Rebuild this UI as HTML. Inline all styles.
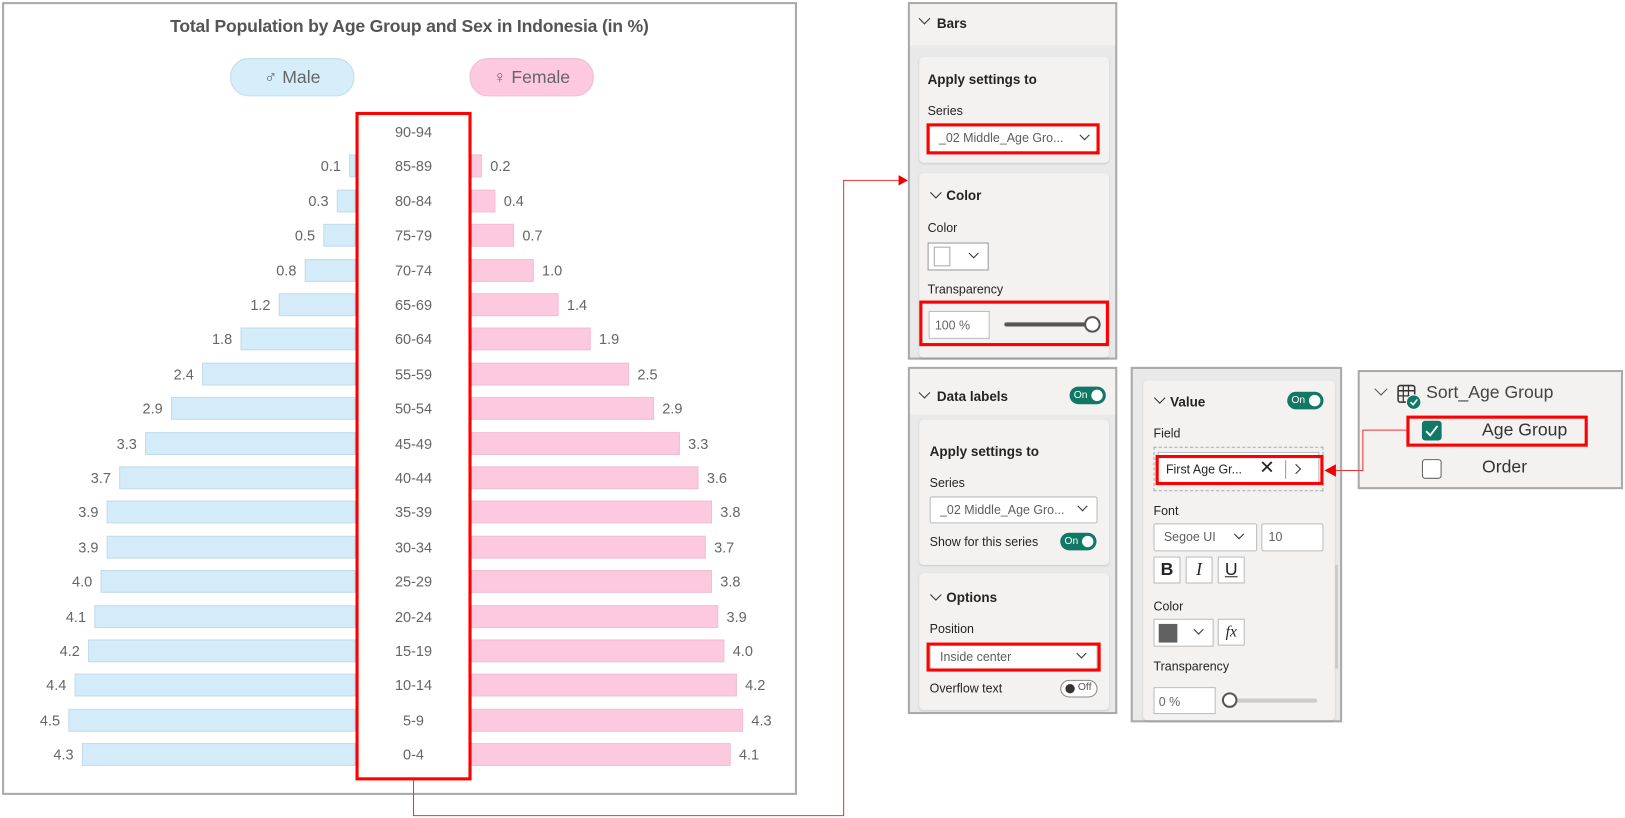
<!DOCTYPE html>
<html><head><meta charset="utf-8">
<style>
*{box-sizing:border-box;margin:0;padding:0}
html,body{width:1625px;height:818px;overflow:hidden;background:#fff}
#w{position:absolute;left:0;top:0;width:1568px;height:789px;transform:scale(1.0364);transform-origin:0 0;font-family:"Liberation Sans",sans-serif;color:#252423}
.a{position:absolute}
.chart{left:2px;top:2px;width:767px;height:765px;border:2px solid #aaa}
.title{left:0;width:790px;top:16px;text-align:center;font-weight:bold;font-size:17px;color:#555;letter-spacing:-0.2px}
.pill{top:56px;width:120px;height:37px;border-radius:18px;font-size:17px;color:#666;text-align:center;line-height:36px}
.row{height:22px;display:flex;align-items:center}
.m{right:1225px;justify-content:flex-end}
.f{left:453px}
.lab{font-size:14px;color:#666}
.mb{height:22px;background:#d4ecf9;border:1px solid #c4dbe8}
.fb{height:22px;background:#fdc9df;border:1px solid #efc0d3}
.age{left:343px;width:112px;text-align:center;font-size:14px;color:#666;height:22px;line-height:22px}
.red{border:3px solid #f00}
.panel{border:2px solid #aaa;background:#e9e9e9}
.card{background:#f3f2f1;border-radius:4px;box-shadow:0 1px 2px rgba(0,0,0,.12)}
.t{font-size:13px;color:#252423;white-space:nowrap}
.b{font-weight:bold}
.dd{background:#fff;border:1px solid #bbb;border-radius:2px;font-size:12px;color:#605e5c;padding-left:9px;line-height:24px;white-space:nowrap}
.chev{position:absolute;width:8px;height:8px;border-right:1.5px solid #333;border-bottom:1.5px solid #333;transform:rotate(45deg)}
.tog{width:35px;height:17px;border-radius:9px;background:#117865;color:#fff;font-size:10px;line-height:17px;padding-left:4px}
.tog:after{content:"";position:absolute;right:3px;top:3px;width:11px;height:11px;border-radius:50%;background:#fff}
.btn{background:#fff;border:1px solid #bbb;width:26px;height:26px;text-align:center;line-height:24px;font-size:17px}
</style></head><body><div id="w">

<div class="a chart"></div>
<div class="a title">Total Population by Age Group and Sex in Indonesia (in %)</div>
<div class="a pill" style="left:222px;background:#d6eefa;border:1px solid #c4dbe6">♂ Male</div>
<div class="a pill" style="left:453px;background:#fdc9df;border:1px solid #e8c0d0">♀ Female</div>

<div class="a age" style="top:116px">90-94</div>
<div class="a row m" style="top:149px"><span class="lab">0.1</span><div class="mb" style="width:6px;margin-left:8px"></div></div><div class="a row f" style="top:149px"><div class="fb" style="width:12px;margin-right:8px"></div><span class="lab">0.2</span></div><div class="a age" style="top:149px">85-89</div>
<div class="a row m" style="top:183px"><span class="lab">0.3</span><div class="mb" style="width:18px;margin-left:8px"></div></div><div class="a row f" style="top:183px"><div class="fb" style="width:25px;margin-right:8px"></div><span class="lab">0.4</span></div><div class="a age" style="top:183px">80-84</div>
<div class="a row m" style="top:216px"><span class="lab">0.5</span><div class="mb" style="width:31px;margin-left:8px"></div></div><div class="a row f" style="top:216px"><div class="fb" style="width:43px;margin-right:8px"></div><span class="lab">0.7</span></div><div class="a age" style="top:216px">75-79</div>
<div class="a row m" style="top:250px"><span class="lab">0.8</span><div class="mb" style="width:49px;margin-left:8px"></div></div><div class="a row f" style="top:250px"><div class="fb" style="width:62px;margin-right:8px"></div><span class="lab">1.0</span></div><div class="a age" style="top:250px">70-74</div>
<div class="a row m" style="top:283px"><span class="lab">1.2</span><div class="mb" style="width:74px;margin-left:8px"></div></div><div class="a row f" style="top:283px"><div class="fb" style="width:86px;margin-right:8px"></div><span class="lab">1.4</span></div><div class="a age" style="top:283px">65-69</div>
<div class="a row m" style="top:316px"><span class="lab">1.8</span><div class="mb" style="width:111px;margin-left:8px"></div></div><div class="a row f" style="top:316px"><div class="fb" style="width:117px;margin-right:8px"></div><span class="lab">1.9</span></div><div class="a age" style="top:316px">60-64</div>
<div class="a row m" style="top:350px"><span class="lab">2.4</span><div class="mb" style="width:148px;margin-left:8px"></div></div><div class="a row f" style="top:350px"><div class="fb" style="width:154px;margin-right:8px"></div><span class="lab">2.5</span></div><div class="a age" style="top:350px">55-59</div>
<div class="a row m" style="top:383px"><span class="lab">2.9</span><div class="mb" style="width:178px;margin-left:8px"></div></div><div class="a row f" style="top:383px"><div class="fb" style="width:178px;margin-right:8px"></div><span class="lab">2.9</span></div><div class="a age" style="top:383px">50-54</div>
<div class="a row m" style="top:417px"><span class="lab">3.3</span><div class="mb" style="width:203px;margin-left:8px"></div></div><div class="a row f" style="top:417px"><div class="fb" style="width:203px;margin-right:8px"></div><span class="lab">3.3</span></div><div class="a age" style="top:417px">45-49</div>
<div class="a row m" style="top:450px"><span class="lab">3.7</span><div class="mb" style="width:228px;margin-left:8px"></div></div><div class="a row f" style="top:450px"><div class="fb" style="width:221px;margin-right:8px"></div><span class="lab">3.6</span></div><div class="a age" style="top:450px">40-44</div>
<div class="a row m" style="top:483px"><span class="lab">3.9</span><div class="mb" style="width:240px;margin-left:8px"></div></div><div class="a row f" style="top:483px"><div class="fb" style="width:234px;margin-right:8px"></div><span class="lab">3.8</span></div><div class="a age" style="top:483px">35-39</div>
<div class="a row m" style="top:517px"><span class="lab">3.9</span><div class="mb" style="width:240px;margin-left:8px"></div></div><div class="a row f" style="top:517px"><div class="fb" style="width:228px;margin-right:8px"></div><span class="lab">3.7</span></div><div class="a age" style="top:517px">30-34</div>
<div class="a row m" style="top:550px"><span class="lab">4.0</span><div class="mb" style="width:246px;margin-left:8px"></div></div><div class="a row f" style="top:550px"><div class="fb" style="width:234px;margin-right:8px"></div><span class="lab">3.8</span></div><div class="a age" style="top:550px">25-29</div>
<div class="a row m" style="top:584px"><span class="lab">4.1</span><div class="mb" style="width:252px;margin-left:8px"></div></div><div class="a row f" style="top:584px"><div class="fb" style="width:240px;margin-right:8px"></div><span class="lab">3.9</span></div><div class="a age" style="top:584px">20-24</div>
<div class="a row m" style="top:617px"><span class="lab">4.2</span><div class="mb" style="width:258px;margin-left:8px"></div></div><div class="a row f" style="top:617px"><div class="fb" style="width:246px;margin-right:8px"></div><span class="lab">4.0</span></div><div class="a age" style="top:617px">15-19</div>
<div class="a row m" style="top:650px"><span class="lab">4.4</span><div class="mb" style="width:271px;margin-left:8px"></div></div><div class="a row f" style="top:650px"><div class="fb" style="width:258px;margin-right:8px"></div><span class="lab">4.2</span></div><div class="a age" style="top:650px">10-14</div>
<div class="a row m" style="top:684px"><span class="lab">4.5</span><div class="mb" style="width:277px;margin-left:8px"></div></div><div class="a row f" style="top:684px"><div class="fb" style="width:264px;margin-right:8px"></div><span class="lab">4.3</span></div><div class="a age" style="top:684px">5-9</div>
<div class="a row m" style="top:717px"><span class="lab">4.3</span><div class="mb" style="width:264px;margin-left:8px"></div></div><div class="a row f" style="top:717px"><div class="fb" style="width:252px;margin-right:8px"></div><span class="lab">4.1</span></div><div class="a age" style="top:717px">0-4</div>
<div class="a red" style="left:343px;top:108px;width:112px;height:645px"></div>

<!-- Bars panel -->
<div class="a panel" style="left:876px;top:2px;width:202px;height:345px"></div>
<div class="a" style="left:878px;top:4px;width:198px;height:40px;background:#f3f2f1"></div>
<div class="chev" style="left:888px;top:14px"></div>
<div class="a t b" style="left:904px;top:15px">Bars</div>
<div class="a card" style="left:887px;top:55px;width:183px;height:102px"></div>
<div class="a t b" style="left:895px;top:69px">Apply settings to</div>
<div class="a t" style="left:895px;top:100px;font-size:12px">Series</div>
<div class="a dd" style="left:896px;top:120px;width:163px;height:27px">_02 Middle_Age Gro...</div>
<div class="chev" style="left:1043px;top:127px;width:7px;height:7px"></div>
<div class="a red" style="left:894px;top:119px;width:167px;height:30px"></div>
<div class="a card" style="left:887px;top:167px;width:183px;height:178px"></div>
<div class="chev" style="left:899px;top:182px"></div>
<div class="a t b" style="left:913px;top:181px">Color</div>
<div class="a t" style="left:895px;top:213px;font-size:12px">Color</div>
<div class="a" style="left:895px;top:234px;width:59px;height:27px;background:#fff;border:1px solid #999"></div>
<div class="a" style="left:901px;top:238px;width:16px;height:19px;border:1px solid #aaa;background:#fff"></div>
<div class="chev" style="left:936px;top:241px;width:7px;height:7px"></div>
<div class="a t" style="left:895px;top:272px;font-size:12px">Transparency</div>
<div class="a" style="left:896px;top:300px;width:59px;height:27px;background:#fff;border:1px solid #bbb;font-size:12px;color:#666;padding:6px 0 0 5px">100 %</div>
<div class="a" style="left:969px;top:311px;width:82px;height:4px;background:#555;border-radius:2px"></div>
<div class="a" style="left:1046px;top:305px;width:16px;height:16px;border-radius:50%;background:#fff;border:2px solid #555"></div>
<div class="a red" style="left:887px;top:290px;width:183px;height:44px"></div>

<!-- Data labels panel -->
<div class="a panel" style="left:876px;top:354px;width:202px;height:335px"></div>
<div class="a" style="left:878px;top:356px;width:198px;height:44px;background:#f3f2f1"></div>
<div class="chev" style="left:888px;top:375px"></div>
<div class="a t b" style="left:904px;top:375px">Data labels</div>
<div class="a tog" style="left:1032px;top:373px">On</div>
<div class="a card" style="left:887px;top:405px;width:183px;height:140px"></div>
<div class="a t b" style="left:897px;top:428px">Apply settings to</div>
<div class="a t" style="left:897px;top:459px;font-size:12px">Series</div>
<div class="a dd" style="left:897px;top:479px;width:162px;height:26px">_02 Middle_Age Gro...</div>
<div class="chev" style="left:1041px;top:485px;width:7px;height:7px"></div>
<div class="a t" style="left:897px;top:516px;font-size:12px">Show for this series</div>
<div class="a tog" style="left:1023px;top:514px">On</div>
<div class="a card" style="left:887px;top:553px;width:183px;height:132px"></div>
<div class="chev" style="left:899px;top:570px"></div>
<div class="a t b" style="left:913px;top:569px">Options</div>
<div class="a t" style="left:897px;top:600px;font-size:12px">Position</div>
<div class="a dd" style="left:897px;top:621px;width:162px;height:25px">Inside center</div>
<div class="chev" style="left:1040px;top:627px;width:7px;height:7px"></div>
<div class="a red" style="left:894px;top:620px;width:168px;height:28px"></div>
<div class="a t" style="left:897px;top:657px;font-size:12px">Overflow text</div>
<div class="a" style="left:1023px;top:656px;width:36px;height:17px;border:1px solid #888;border-radius:9px;background:#fff;font-size:10px;color:#555;padding:1px 0 0 16px">Off</div>
<div class="a" style="left:1028px;top:660px;width:9px;height:9px;border-radius:50%;background:#333"></div>

<!-- Value panel -->
<div class="a panel" style="left:1091px;top:354px;width:204px;height:343px"></div>
<div class="a card" style="left:1103px;top:367px;width:185px;height:328px"></div>
<div class="chev" style="left:1115px;top:380px"></div>
<div class="a t b" style="left:1129px;top:380px">Value</div>
<div class="a tog" style="left:1242px;top:378px">On</div>
<div class="a t" style="left:1113px;top:411px;font-size:12px">Field</div>
<div class="a" style="left:1113px;top:431px;width:164px;height:43px;border:1px dashed #aaa"></div>
<div class="a" style="left:1117px;top:436px;width:156px;height:32px;background:#fff;border:1px solid #bbb"></div>
<div class="a t" style="left:1125px;top:446px;font-size:12px">First Age Gr...</div>
<div class="a" style="left:1215px;top:441px;font-size:18px;color:#222">✕</div>
<div class="a" style="left:1240px;top:444px;width:1px;height:18px;background:#999"></div>
<div class="chev" style="left:1247px;top:449px;width:7px;height:7px;transform:rotate(-45deg)"></div>
<div class="a red" style="left:1115px;top:439px;width:162px;height:29px"></div>
<div class="a t" style="left:1113px;top:486px;font-size:12px">Font</div>
<div class="a dd" style="left:1113px;top:505px;width:100px;height:27px;line-height:25px">Segoe UI</div>
<div class="chev" style="left:1192px;top:512px;width:7px;height:7px"></div>
<div class="a dd" style="left:1217px;top:505px;width:60px;height:27px;line-height:25px;padding-left:6px">10</div>
<div class="a btn b" style="left:1113px;top:537px">B</div>
<div class="a btn" style="left:1144px;top:537px;font-style:italic;font-family:'Liberation Serif',serif">I</div>
<div class="a btn" style="left:1175px;top:537px;text-decoration:underline">U</div>
<div class="a t" style="left:1113px;top:578px;font-size:12px">Color</div>
<div class="a" style="left:1113px;top:597px;width:58px;height:27px;background:#fff;border:1px solid #bbb"></div>
<div class="a" style="left:1118px;top:602px;width:18px;height:18px;background:#616161"></div>
<div class="chev" style="left:1153px;top:604px;width:7px;height:7px"></div>
<div class="a btn" style="left:1175px;top:597px;font-style:italic;font-family:'Liberation Serif',serif;font-size:15px">fx</div>
<div class="a t" style="left:1113px;top:636px;font-size:12px">Transparency</div>
<div class="a" style="left:1113px;top:663px;width:60px;height:26px;background:#fff;border:1px solid #bbb;font-size:12px;color:#666;padding:6px 0 0 4px">0 %</div>
<div class="a" style="left:1185px;top:674px;width:86px;height:4px;background:#ccc;border-radius:2px"></div>
<div class="a" style="left:1179px;top:668px;width:15px;height:15px;border-radius:50%;background:#fff;border:2px solid #555"></div>
<div class="a" style="left:1288px;top:545px;width:3px;height:100px;background:#ccc"></div>

<!-- Sort panel -->
<div class="a" style="left:1310px;top:357px;width:256px;height:115px;border:2px solid #aaa;background:#f3f2f1"></div>
<div class="chev" style="left:1328px;top:371px;width:9px;height:9px;border-color:#555;border-width:1px"></div>
<svg class="a" style="left:1348px;top:371px" width="26" height="26">
<rect x="1" y="1" width="16" height="16" rx="2" fill="none" stroke="#333" stroke-width="1.5"/>
<line x1="1" y1="6" x2="17" y2="6" stroke="#333" stroke-width="1.5"/><line x1="1" y1="11" x2="17" y2="11" stroke="#333" stroke-width="1.2"/>
<line x1="6" y1="1" x2="6" y2="17" stroke="#333" stroke-width="1.2"/><line x1="11" y1="1" x2="11" y2="17" stroke="#333" stroke-width="1.2"/>
<circle cx="16" cy="17" r="7" fill="#117865" stroke="#fff" stroke-width="1"/>
<polyline points="13,17 15.5,19.5 19.5,14.5" fill="none" stroke="#fff" stroke-width="1.5"/>
</svg>
<div class="a" style="left:1376px;top:369px;font-size:17px;color:#444">Sort_Age Group</div>
<div class="a" style="left:1372px;top:406px;width:19px;height:19px;border-radius:3px;background:#117865"></div>
<svg class="a" style="left:1372px;top:406px" width="19" height="19"><polyline points="4,10 8,14 15,5" fill="none" stroke="#fff" stroke-width="1.8"/></svg>
<div class="a" style="left:1430px;top:405px;font-size:17px;color:#333">Age Group</div>
<div class="a red" style="left:1357px;top:401px;width:175px;height:30px"></div>
<div class="a" style="left:1372px;top:443px;width:19px;height:19px;border-radius:3px;border:1px solid #666;background:#fff"></div>
<div class="a" style="left:1430px;top:441px;font-size:17px;color:#333">Order</div>

<!-- connectors on top -->
<svg class="a" style="left:0;top:0" width="1568" height="789">
<polyline points="399,753 399,787 814,787 814,174 870,174" fill="none" stroke="#e33" stroke-width="1"/>
<polygon points="876,174 867,169 867,179" fill="#e00"/>
<polyline points="1357,415 1315,415 1315,454 1288,454" fill="none" stroke="#e33" stroke-width="1"/>
<polygon points="1278,454 1289,448 1289,460" fill="#e00"/>
</svg>
</div></body></html>
